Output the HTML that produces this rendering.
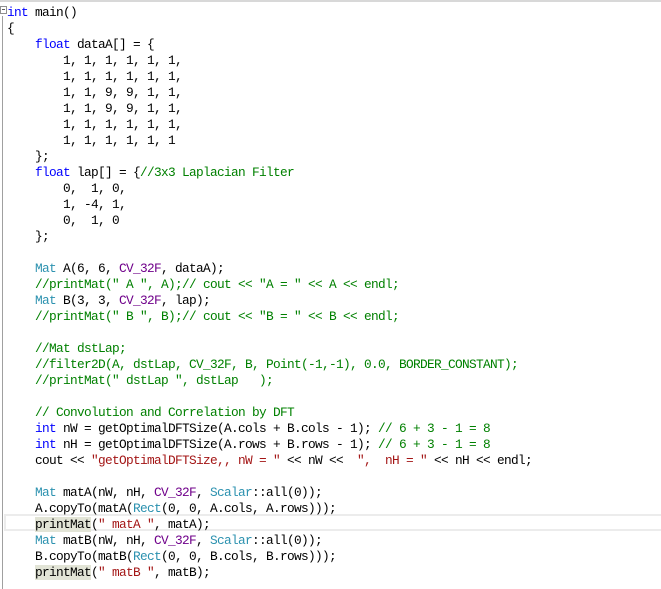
<!DOCTYPE html>
<html><head><meta charset="utf-8"><style>
html,body{margin:0;padding:0;background:#fff;width:661px;height:589px;overflow:hidden;position:relative}
#top{position:absolute;left:0;top:0;width:661px;height:2px;background:#d8d8d8}
#left{position:absolute;left:2px;top:16px;width:1px;height:573px;background:#a0a0a0}
#box{position:absolute;left:0;top:6px;width:5px;height:6px;border:1px solid #909090;background:#fff}
#box:after{content:"";position:absolute;left:1px;top:2px;width:3px;height:1px;background:#606060}
#cur{position:absolute;left:4px;top:514px;width:660px;height:13px;border:2px solid #ececec;border-right:none}
pre{position:absolute;left:7px;top:5px;margin:0;font-family:"Liberation Mono",monospace;font-size:12.8px;letter-spacing:-0.68px;line-height:16px;color:#000}
.k{color:#0000ff}.t{color:#2b91af}.m{color:#6f008a}.s{color:#a31515}.c{color:#008000}
.h{background:#e2e4d6}
</style></head><body>
<div id="top"></div><div id="left"></div><div id="box"></div><div id="cur"></div>
<pre><span class="k">int</span> main()
{
    <span class="k">float</span> dataA[] = {
        1, 1, 1, 1, 1, 1,
        1, 1, 1, 1, 1, 1,
        1, 1, 9, 9, 1, 1,
        1, 1, 9, 9, 1, 1,
        1, 1, 1, 1, 1, 1,
        1, 1, 1, 1, 1, 1
    };
    <span class="k">float</span> lap[] = {<span class="c">//3x3 Laplacian Filter</span>
        0,  1, 0,
        1, -4, 1,
        0,  1, 0
    };

    <span class="t">Mat</span> A(6, 6, <span class="m">CV_32F</span>, dataA);
    <span class="c">//printMat(" A ", A);// cout &lt;&lt; "A = " &lt;&lt; A &lt;&lt; endl;</span>
    <span class="t">Mat</span> B(3, 3, <span class="m">CV_32F</span>, lap);
    <span class="c">//printMat(" B ", B);// cout &lt;&lt; "B = " &lt;&lt; B &lt;&lt; endl;</span>

    <span class="c">//Mat dstLap;</span>
    <span class="c">//filter2D(A, dstLap, CV_32F, B, Point(-1,-1), 0.0, BORDER_CONSTANT);</span>
    <span class="c">//printMat(" dstLap ", dstLap   );</span>

    <span class="c">// Convolution and Correlation by DFT</span>
    <span class="k">int</span> nW = getOptimalDFTSize(A.cols + B.cols - 1); <span class="c">// 6 + 3 - 1 = 8</span>
    <span class="k">int</span> nH = getOptimalDFTSize(A.rows + B.rows - 1); <span class="c">// 6 + 3 - 1 = 8</span>
    cout &lt;&lt; <span class="s">"getOptimalDFTSize,, nW = "</span> &lt;&lt; nW &lt;&lt;  <span class="s">",  nH = "</span> &lt;&lt; nH &lt;&lt; endl;

    <span class="t">Mat</span> matA(nW, nH, <span class="m">CV_32F</span>, <span class="t">Scalar</span>::all(0));
    A.copyTo(matA(<span class="t">Rect</span>(0, 0, A.cols, A.rows)));
    <span class="h">printMat</span>(<span class="s">" matA "</span>, matA);
    <span class="t">Mat</span> matB(nW, nH, <span class="m">CV_32F</span>, <span class="t">Scalar</span>::all(0));
    B.copyTo(matB(<span class="t">Rect</span>(0, 0, B.cols, B.rows)));
    <span class="h">printMat</span>(<span class="s">" matB "</span>, matB);</pre>
</body></html>
